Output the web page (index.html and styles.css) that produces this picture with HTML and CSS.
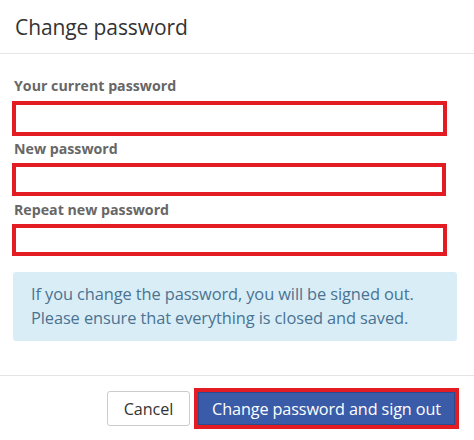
FILE: index.html
```html
<!DOCTYPE html>
<html>
<head>
<meta charset="utf-8">
<link rel="stylesheet" href="styles.css">
</head>
<body>
<div class="dialog">
  <div class="header"><h1 class="title">Change password</h1></div>
  <div class="content">
    <label class="label l1">Your current password</label>
    <div class="input i1"></div>
    <label class="label l2">New password</label>
    <div class="input i2"></div>
    <label class="label l3">Repeat new password</label>
    <div class="input i3"></div>
    <div class="info">If you change the password, you will be signed out.<br>Please ensure that everything is closed and saved.</div>
  </div>
  <div class="footer">
    <button class="btn cancel">Cancel</button>
    <button class="btn primary">Change password and sign out</button>
  </div>
</div>
</body>
</html>
```
FILE: styles.css
```css
html, body { margin: 0; padding: 0; background: #fff; }
body { font-family: "Open Sans", "Noto Sans", sans-serif; color: #333; width: 474px; height: 440px; overflow: hidden; }
.header { height: 53px; border-bottom: 1px solid #e5e5e5; display: flex; align-items: center; padding-left: 15px; }
.title { margin: 0; font-size: 21px; font-weight: 400; color: #333; letter-spacing: -0.1px; position: relative; top: 0; }
.content { padding: 23px 0 0 0; }
.label { display: block; font-size: 14.2px; font-weight: 700; color: #676767; line-height: 18px; margin-left: 14px; letter-spacing: 0; }
.input { box-sizing: border-box; border: 4px solid #e31b23; margin-left: 12px; width: 435px; background: #fff; }
.i1 { height: 35px; margin-top: 6px; }
.l2 { margin-top: 4px; }
.i2 { height: 33px; margin-top: 5px; width: 434px; }
.l3 { margin-top: 5px; }
.i3 { height: 32px; margin-top: 5px; }
.info { box-sizing: border-box; margin: 16px 17px 0 13px; height: 69px; background: #d9edf7; border-radius: 3px; color: #4a7392; font-size: 16.4px; line-height: 24px; padding: 10px 0 0 18px; letter-spacing: -0.1px; }
.footer { margin-top: 34px; border-top: 1px solid #e5e5e5; display: flex; justify-content: flex-end; align-items: center; padding: 12px 15px 0 0; gap: 4px; }
.btn { font-family: "Open Sans", "Noto Sans", sans-serif; font-size: 16.2px; letter-spacing: -0.1px; }
.cancel { box-sizing: border-box; height: 35px; width: 83px; background: #fff; border: 1px solid #ccc; border-radius: 3px; color: #333; padding: 0; }
.primary { box-sizing: border-box; height: 41px; width: 265px; background: #3a5ca8; border: 4px solid #e31b23; color: #fff; padding: 0; border-radius: 0; box-shadow: inset 0 0 0 1px #2d4a8f; }
```
